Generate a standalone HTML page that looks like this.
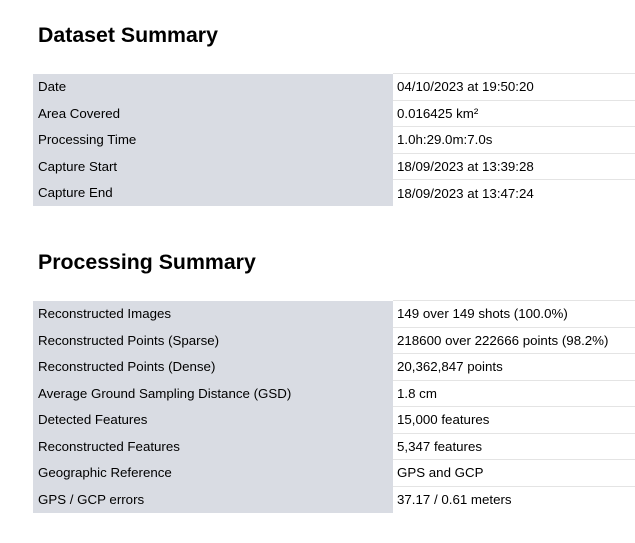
<!DOCTYPE html>
<html><head><style>
body{margin:0;background:#fff;font-family:"Liberation Sans",Arial,sans-serif;color:#000;width:635px;height:543px;overflow:hidden;position:relative}
h2{position:absolute;left:38px;margin:0;font-size:21.3px;font-weight:bold;line-height:1}
table{position:absolute;left:33px;width:602px;border-collapse:collapse;font-size:13.3px}
td{height:26.5px;padding:0 0 0 5px;box-sizing:border-box;vertical-align:middle}
td.l{background:#d9dce3;width:360px}
td.r{border-top:1px solid #e4e4e4;padding-left:4px}
</style></head><body>
<h2 style="top:25px">Dataset Summary</h2>
<table style="top:73px">
<tr><td class="l">Date</td><td class="r">04/10/2023 at 19:50:20</td></tr>
<tr><td class="l">Area Covered</td><td class="r">0.016425 km²</td></tr>
<tr><td class="l">Processing Time</td><td class="r">1.0h:29.0m:7.0s</td></tr>
<tr><td class="l">Capture Start</td><td class="r">18/09/2023 at 13:39:28</td></tr>
<tr><td class="l">Capture End</td><td class="r">18/09/2023 at 13:47:24</td></tr>
</table>
<h2 style="top:252px">Processing Summary</h2>
<table style="top:300px">
<tr><td class="l">Reconstructed Images</td><td class="r">149 over 149 shots (100.0%)</td></tr>
<tr><td class="l">Reconstructed Points (Sparse)</td><td class="r">218600 over 222666 points (98.2%)</td></tr>
<tr><td class="l">Reconstructed Points (Dense)</td><td class="r">20,362,847 points</td></tr>
<tr><td class="l">Average Ground Sampling Distance (GSD)</td><td class="r">1.8 cm</td></tr>
<tr><td class="l">Detected Features</td><td class="r">15,000 features</td></tr>
<tr><td class="l">Reconstructed Features</td><td class="r">5,347 features</td></tr>
<tr><td class="l">Geographic Reference</td><td class="r">GPS and GCP</td></tr>
<tr><td class="l">GPS / GCP errors</td><td class="r">37.17 / 0.61 meters</td></tr>
</table>
</body></html>
